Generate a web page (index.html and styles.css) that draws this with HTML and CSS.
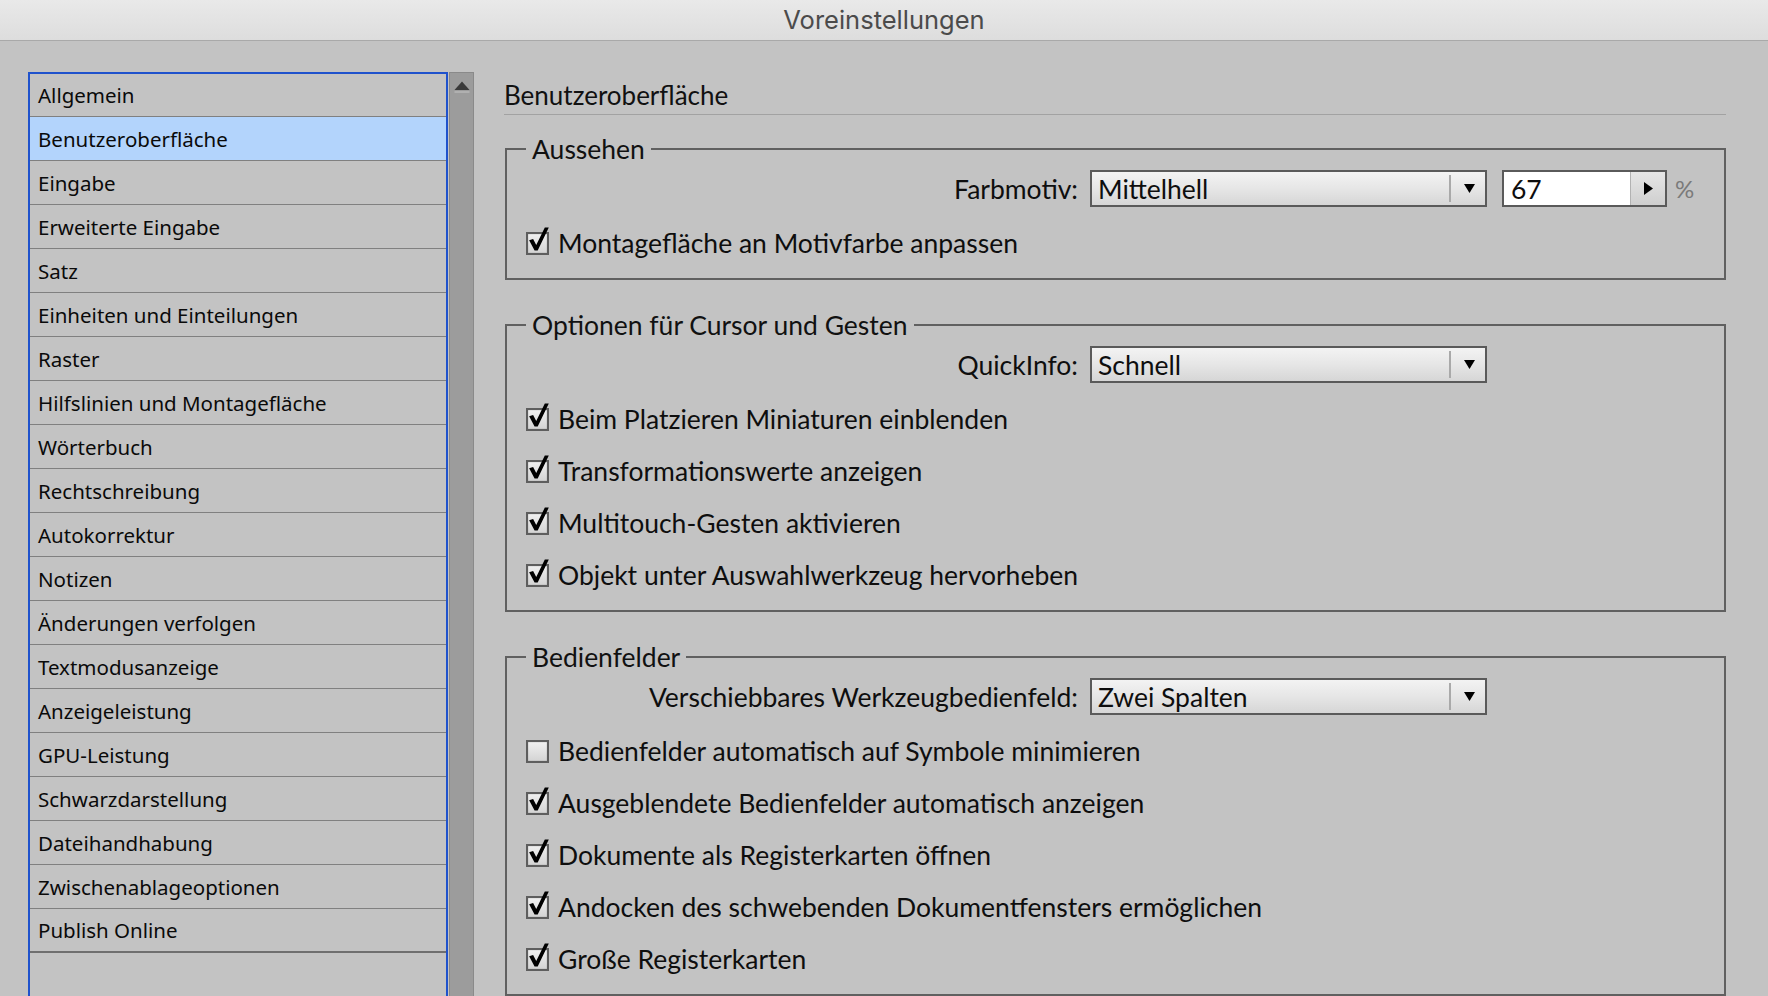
FILE: index.html
```html
<!DOCTYPE html>
<html lang="de">
<head>
<meta charset="utf-8">
<title>Voreinstellungen</title>
<link rel="stylesheet" href="styles.css">
</head>
<body>
<svg class="defs" width="0" height="0" aria-hidden="true">
  <defs>
    <linearGradient id="cbfill" x1="0" y1="0" x2="0" y2="1">
      <stop offset="0" stop-color="#f2f2f2"/>
      <stop offset="1" stop-color="#d2d2d2"/>
    </linearGradient>
    <symbol id="cb-off" viewBox="0 0 22 22" overflow="visible">
      <rect x="1" y="1" width="20" height="20" fill="url(#cbfill)" stroke="#5e5e5e" stroke-width="2"/>
    </symbol>
    <symbol id="cb-on" viewBox="0 0 22 22" overflow="visible">
      <rect x="1" y="1" width="20" height="20" fill="url(#cbfill)" stroke="#5e5e5e" stroke-width="2"/>
      <path d="M3 8 L6.8 6.8 L9.8 12.4 L18 -4.2 L21.8 -4.2 L11.2 17.8 L8.2 17.8 Z" fill="#000"/>
    </symbol>
  </defs>
</svg>
<div class="window">
  <header class="titlebar">Voreinstellungen</header>
  <div class="main">
    <div class="sidebar">
      <ul class="list">
        <li>Allgemein</li>
        <li class="selected">Benutzeroberfläche</li>
        <li>Eingabe</li>
        <li>Erweiterte Eingabe</li>
        <li>Satz</li>
        <li>Einheiten und Einteilungen</li>
        <li>Raster</li>
        <li>Hilfslinien und Montagefläche</li>
        <li>Wörterbuch</li>
        <li>Rechtschreibung</li>
        <li>Autokorrektur</li>
        <li>Notizen</li>
        <li>Änderungen verfolgen</li>
        <li>Textmodusanzeige</li>
        <li>Anzeigeleistung</li>
        <li>GPU-Leistung</li>
        <li>Schwarzdarstellung</li>
        <li>Dateihandhabung</li>
        <li>Zwischenablageoptionen</li>
        <li>Publish Online</li>
      </ul>
      <div class="scrollbar">
        <svg class="scroll-up" width="25" height="24" viewBox="0 0 25 24">
          <path d="M4.5 17 L19.5 17 L12 8.5 Z" fill="#3a3a3a"/>
          <rect x="4.5" y="18.5" width="15" height="1" fill="#c4c4c4"/>
        </svg>
      </div>
    </div>

    <section class="content">
      <h1 class="page-title">Benutzeroberfläche</h1>

      <fieldset class="group">
        <legend>Aussehen</legend>
        <div class="field-row">
          <span class="field-label">Farbmotiv:</span>
          <div class="select">
            <span class="select-value">Mittelhell</span>
            <span class="select-btn"><svg width="11" height="9" viewBox="0 0 11 9"><path d="M0 0 L11 0 L5.5 9 Z" fill="#000"/></svg></span>
          </div>
          <div class="spin">
            <span class="spin-value">67</span>
            <span class="spin-btn"><svg width="9" height="13" viewBox="0 0 9 13"><path d="M0 0 L9 6.5 L0 13 Z" fill="#000"/></svg></span>
          </div>
          <span class="unit">%</span>
        </div>
        <div class="check-row"><svg class="cb"><use href="#cb-on"/></svg><span>Montagefläche an Motivfarbe anpassen</span></div>
      </fieldset>

      <fieldset class="group">
        <legend>Optionen für Cursor und Gesten</legend>
        <div class="field-row">
          <span class="field-label">QuickInfo:</span>
          <div class="select">
            <span class="select-value">Schnell</span>
            <span class="select-btn"><svg width="11" height="9" viewBox="0 0 11 9"><path d="M0 0 L11 0 L5.5 9 Z" fill="#000"/></svg></span>
          </div>
        </div>
        <div class="check-row"><svg class="cb"><use href="#cb-on"/></svg><span>Beim Platzieren Miniaturen einblenden</span></div>
        <div class="check-row"><svg class="cb"><use href="#cb-on"/></svg><span>Transformationswerte anzeigen</span></div>
        <div class="check-row"><svg class="cb"><use href="#cb-on"/></svg><span>Multitouch-Gesten aktivieren</span></div>
        <div class="check-row"><svg class="cb"><use href="#cb-on"/></svg><span>Objekt unter Auswahlwerkzeug hervorheben</span></div>
      </fieldset>

      <fieldset class="group">
        <legend>Bedienfelder</legend>
        <div class="field-row">
          <span class="field-label">Verschiebbares Werkzeugbedienfeld:</span>
          <div class="select">
            <span class="select-value">Zwei Spalten</span>
            <span class="select-btn"><svg width="11" height="9" viewBox="0 0 11 9"><path d="M0 0 L11 0 L5.5 9 Z" fill="#000"/></svg></span>
          </div>
        </div>
        <div class="check-row"><svg class="cb"><use href="#cb-off"/></svg><span>Bedienfelder automatisch auf Symbole minimieren</span></div>
        <div class="check-row"><svg class="cb"><use href="#cb-on"/></svg><span>Ausgeblendete Bedienfelder automatisch anzeigen</span></div>
        <div class="check-row"><svg class="cb"><use href="#cb-on"/></svg><span>Dokumente als Registerkarten öffnen</span></div>
        <div class="check-row"><svg class="cb"><use href="#cb-on"/></svg><span>Andocken des schwebenden Dokumentfensters ermöglichen</span></div>
        <div class="check-row"><svg class="cb"><use href="#cb-on"/></svg><span>Große Registerkarten</span></div>
      </fieldset>
    </section>
  </div>
</div>
</body>
</html>
```

FILE: styles.css
```css
* { box-sizing: border-box; }

html, body {
  margin: 0;
  padding: 0;
}

body {
  width: 1768px;
  height: 996px;
  overflow: hidden;
  background: #c3c3c3;
  color: #0e0e0e;
  font-family: "Lato", "Noto Sans", sans-serif;
}

.defs {
  position: absolute;
  width: 0;
  height: 0;
}

.window {
  display: flex;
  flex-direction: column;
  height: 996px;
}

.titlebar {
  height: 41px;
  line-height: 40px;
  border-bottom: 1px solid #a9a9a9;
  background: linear-gradient(#e9e9e9, #dddddd);
  text-align: center;
  font-family: "Inter", "Noto Sans", sans-serif;
  font-size: 25.5px;
  color: #4b4b4b;
  flex: none;
}

.main {
  flex: 1;
  display: flex;
  padding: 31px 0 0 28px;
  overflow: hidden;
}

/* ---------- sidebar list ---------- */
.sidebar {
  display: flex;
  gap: 1px;
  flex: none;
  height: 1000px;
}

.list {
  width: 420px;
  margin: 0;
  padding: 0;
  list-style: none;
  border: 2px solid #1f52cc;
  border-bottom: none;
  background: #c3c3c3;
  font-family: "Noto Sans", "Open Sans", sans-serif;
  font-size: 20.5px;
  color: #0a0a0a;
}

.list li {
  height: 44px;
  display: flex;
  align-items: center;
  padding-left: 8px;
  border-bottom: 1px solid #808080;
}

.list li:first-child {
  height: 43px;
}

.list li:last-child {
  border-bottom: 2px solid #6f6f6f;
}

.list li.selected {
  background: #b3d4fc;
}

.scrollbar {
  width: 25px;
  background: #9c9c9c;
  border: 1px solid #8a8a8a;
  border-bottom: none;
}

.scroll-up {
  display: block;
}

/* ---------- content ---------- */
.content {
  width: 1222px;
  margin-left: 30px;
  padding-top: 9px;
}

.page-title {
  margin: 0;
  font-size: 26px;
  font-weight: normal;
  line-height: 28px;
  padding-bottom: 5px;
  border-bottom: 1px solid #a2a2a2;
  color: #111;
}

.group {
  margin: 20px 0 0 1px;
  padding: 7px 18px 9px 19px;
  border: 2px solid #606060;
  min-width: 0;
}

.group + .group {
  margin-top: 31px;
}

.group legend {
  padding: 0 6px;
  font-size: 26.5px;
  line-height: 28px;
  color: #111;
}

.field-row {
  display: flex;
  align-items: center;
  height: 37px;
}

.field-label {
  width: 552px;
  margin-right: 12px;
  text-align: right;
  font-size: 26.5px;
  white-space: nowrap;
}

.select {
  width: 397px;
  height: 37px;
  display: flex;
  align-items: center;
  border: 2px solid #5a5a5a;
  background: linear-gradient(#f3f3f3, #e6e6e6 50%, #d6d6d6);
}

.select-value {
  flex: 1;
  padding-left: 6px;
  font-size: 26.5px;
  white-space: nowrap;
}

.select-btn {
  width: 36px;
  height: 27px;
  display: flex;
  align-items: center;
  justify-content: center;
  border-left: 2px solid #a9a9a9;
}

.select-btn svg {
  display: block;
  margin-left: 2px;
}

.spin {
  width: 165px;
  height: 37px;
  margin-left: 15px;
  display: flex;
  border: 2px solid #5a5a5a;
}

.spin-value {
  flex: 1;
  background: #fff;
  padding-left: 7px;
  font-size: 26.5px;
  display: flex;
  align-items: center;
}

.spin-btn {
  width: 35px;
  display: flex;
  align-items: center;
  justify-content: center;
  border-left: 1px solid #b2b2b2;
  background: linear-gradient(#e6e6e6, #cfcfcf);
}

.unit {
  margin-left: 8px;
  font-size: 24px;
  color: #7a7a7a;
}

.check-row {
  display: flex;
  align-items: center;
  height: 52px;
  font-size: 26.5px;
  white-space: nowrap;
}

.field-row + .check-row {
  margin-top: 10px;
}

.cb {
  width: 23px;
  height: 23px;
  overflow: visible;
  margin-right: 9px;
  flex: none;
}
```
